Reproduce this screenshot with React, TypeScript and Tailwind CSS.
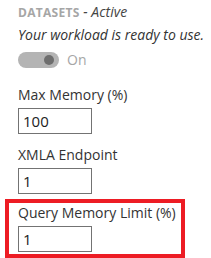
export default function App() {
  const font = { fontFamily: '"Open Sans", "Noto Sans", sans-serif' };
  return (
    <div className="w-[211px] h-[258px] bg-white overflow-hidden text-[#333]" style={font}>
      <div className="pl-[18px] pt-[3px]">
        <div className="text-[12px] leading-[18px]">
          <span className="font-bold tracking-[0.3px] text-[#a6a6a6]">DATASETS</span>
          <span className="italic text-[#444] text-[14px]"> - Active</span>
        </div>
        <div className="italic text-[14px] leading-[20px] mt-[3px] text-[#333]">
          Your workload is ready to use.
        </div>
        <div className="flex items-center gap-[8px] mt-[7px] h-[16px]">
          <div className="w-[41px] h-[16px] rounded-full bg-[#b4b4b4] flex items-center justify-end pr-[5px]">
            <div className="w-[10px] h-[10px] rounded-full bg-[#6e6e6e]" />
          </div>
          <span className="text-[14px] leading-[16px] text-[#a6a6a6]">On</span>
        </div>
        <Field label="Max Memory (%)" value="100" className="mt-[17px]" />
        <Field label="XMLA Endpoint" value="1" className="mt-[11px]" />
      </div>
      <div className="ml-[5px] mt-[5px] w-[180px] border-4 border-[#ed1c24] pl-[9px] pb-[2px]">
        <Field label="Query Memory Limit (%)" value="1" />
      </div>
    </div>
  );
}

function Field({ label, value, className = "" }: { label: string; value: string; className?: string }) {
  return (
    <div className={className}>
      <div className="text-[14px] leading-[20px] text-[#333]">{label}</div>
      <div className="mt-[3px] w-[74px] h-[26px] border border-[#737373] flex items-center pl-[4px] text-[15px] text-[#222]">
        {value}
      </div>
    </div>
  );
}
